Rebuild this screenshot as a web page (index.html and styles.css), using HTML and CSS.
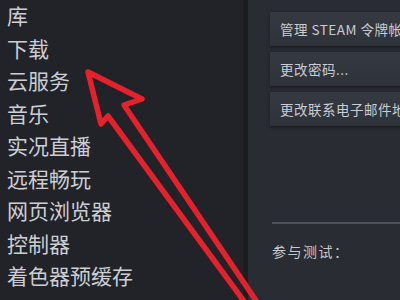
FILE: index.html
```html
<!DOCTYPE html>
<html>
<head>
    <title>设置</title>
    <link rel="stylesheet" href="styles.css">
</head>
<body>
    <div class="window">
        <div class="sidebar">
            <ul class="menu">
                <li>库</li>
                <li>下载</li>
                <li>云服务</li>
                <li>音乐</li>
                <li>实况直播</li>
                <li>远程畅玩</li>
                <li>网页浏览器</li>
                <li>控制器</li>
                <li>着色器预缓存</li>
            </ul>
        </div>
        <div class="panel">
            <div class="buttons">
                <div class="btn">管理 STEAM 令牌帐户安全</div>
                <div class="btn">更改密码...</div>
                <div class="btn">更改联系电子邮件地址</div>
            </div>
            <div class="divider"></div>
            <div class="beta-label">参与测试：</div>
        </div>
    </div>

    <svg class="arrow" width="400" height="300" viewBox="0 0 400 300">
        <polygon points="88,72 142,99 124,105 261,308 249,308 108,116 101,124"
                 fill="none" stroke="#e5212b" stroke-width="5.5" stroke-linejoin="round" />
    </svg>
</body>
</html>
```

FILE: styles.css
```css
body {
    margin: 0;
    width: 400px;
    height: 300px;
    overflow: hidden;
    background: #292c33;
    font-family: "Noto Sans CJK SC", "Noto Sans", sans-serif;
}

.window {
    display: flex;
    height: 300px;
}

.sidebar {
    width: 243px;
    flex-shrink: 0;
    background: #212328;
    border-right: 5px solid #1b1d21;
}

.menu {
    list-style: none;
    margin: -1px 0 0 0;
    padding: 0 0 0 7px;
}

.menu li {
    font-size: 21px;
    line-height: 32.5px;
    color: #cccfd3;
    white-space: nowrap;
}

.panel {
    flex: 1;
    padding: 12px 0 0 22px;
    overflow: hidden;
}

.buttons {
    display: flex;
    flex-direction: column;
    gap: 6px;
}

.btn {
    height: 34px;
    line-height: 34px;
    padding-left: 10px;
    width: 200px;
    font-size: 13.5px;
    letter-spacing: 0.5px;
    color: #c9ccd1;
    white-space: nowrap;
    background: linear-gradient(180deg, #353941 0%, #2e3239 100%);
    box-shadow: 0 1px 3px rgba(0, 0, 0, 0.45);
}

.divider {
    margin: 96px 0 0 2px;
    height: 2px;
    background: #4c5058;
}

.beta-label {
    margin: 17px 0 0 2px;
    font-size: 14px;
    letter-spacing: 1.5px;
    color: #c6c9ce;
}

.arrow {
    position: absolute;
    left: 0;
    top: 0;
}
```
